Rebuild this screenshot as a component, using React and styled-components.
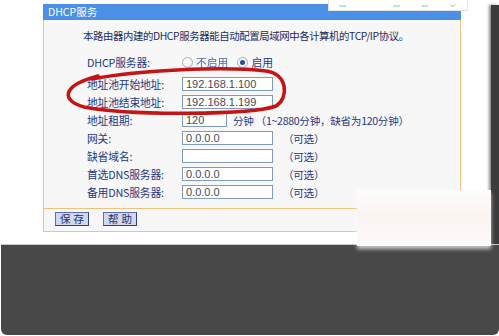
import React from "react";
import styled, { createGlobalStyle } from "styled-components";

const GlobalStyle = createGlobalStyle`
  html, body { margin: 0; padding: 0; background: #ffffff; }
  #root { width: 499px; height: 336px; }
`;

const CN = `"Noto Sans CJK SC", "DejaVu Sans", sans-serif`;

const Page = styled.div`
  position: relative;
  width: 499px;
  height: 336px;
  overflow: hidden;
  background: #ffffff;
  display: flex;
  flex-direction: column;
  font-family: ${CN};
`;

const TopArea = styled.div`
  height: 244px;
  display: flex;
  align-items: flex-start;
`;

const Panel = styled.section`
  margin-left: 43px;
  margin-top: 4px;
  width: 418px;
  display: flex;
  flex-direction: column;
`;

const Header = styled.div`
  height: 16px;
  background: #4b8fe6;
  color: #ffffff;
  font-size: 10.5px;
  line-height: 16px;
  padding-left: 5px;
`;

const Body = styled.div`
  height: 212px;
  box-sizing: border-box;
  background: #f7f7f8;
  border: 1px solid #f2c27d;
  border-top: none;
  display: flex;
  flex-direction: column;
`;

const Intro = styled.p`
  margin: 9px 0 0 39px;
  height: 14px;
  line-height: 14px;
  font-size: 10.4px;
  color: #1a2a64;
  white-space: nowrap;
  letter-spacing: -0.4px;
`;

const Form = styled.div`
  margin-top: 10px;
  padding-left: 43px;
  display: flex;
  flex-direction: column;
`;

const Row = styled.div`
  height: 18px;
  display: flex;
  align-items: center;
  margin-bottom: ${(p) => (p.$spaced ? "4px" : "0")};
`;

const Label = styled.span`
  width: 95px;
  flex: none;
  font-size: 10.8px;
  color: #1d3784;
  white-space: nowrap;
  letter-spacing: -0.2px;
`;

const Input = styled.div`
  width: ${(p) => p.$w || 91}px;
  height: 14px;
  box-sizing: border-box;
  border: 1px solid #7f9bc0;
  background: #ffffff;
  font-family: "Liberation Sans", Arial, sans-serif;
  font-size: 11px;
  line-height: 12px;
  color: #444a55;
  padding-left: 3px;
  flex: none;
`;

const Note = styled.span`
  margin-left: ${(p) => p.$ml || 10}px;
  font-size: 10.6px;
  color: #1d3784;
  white-space: nowrap;
  letter-spacing: -0.3px;
`;

const Radio = styled.span`
  width: 9px;
  height: 9px;
  border-radius: 50%;
  border: 1px solid #a8b0bc;
  background: radial-gradient(circle at 40% 40%, #ffffff 0, #e6e9ee 100%);
  margin: 0 3px 0 ${(p) => p.$ml || 0}px;
  position: relative;
  flex: none;
  &::after {
    content: "";
    display: ${(p) => (p.$on ? "block" : "none")};
    position: absolute;
    left: 2px;
    top: 2px;
    width: 5px;
    height: 5px;
    border-radius: 50%;
    background: #2a4b8e;
  }
`;

const RadioText = styled.span`
  font-size: 10.8px;
  color: #1d3784;
  opacity: ${(p) => (p.$dim ? 0.75 : 1)};
`;

const Footer = styled.div`
  margin-top: 7px;
  border-top: 1px solid #f2c27d;
  padding: 3px 0 0 11px;
  display: flex;
  gap: 14px;
`;

const Button = styled.div`
  width: 34px;
  height: 14px;
  box-sizing: border-box;
  border: 1px solid #5a6fae;
  border-right-color: #2f3f77;
  border-bottom-color: #2f3f77;
  background: #cfd8ee;
  color: #1d2f6e;
  font-size: 10.5px;
  line-height: 12px;
  text-align: center;
  letter-spacing: 3px;
  padding-left: 3px;
`;

const RightShade = styled.div`
  margin-left: auto;
  margin-top: 5px;
  width: 8px;
  align-self: stretch;
  background: #3b3b3b;
  box-shadow: -2px 0 3px rgba(40, 40, 40, 0.55);
`;

const BottomArea = styled.div`
  flex: 1;
  background: #484848;
  border-top: 1px solid #c9c9c9;
  border-radius: 0 0 6px 6px;
  margin: 0 0 1px 1px;
`;

const Tabs = styled.div`
  position: absolute;
  left: 328px;
  top: 0;
  width: 138px;
  height: 10px;
  background: #ffffff;
  border: 1px solid #e4e4e4;
  border-top: none;
  display: flex;
  align-items: center;
  justify-content: space-around;
`;

const TabItem = styled.span`
  font-family: "Liberation Sans", sans-serif;
  font-size: 4px;
  color: #4bb3a4;
  letter-spacing: 0.5px;
`;

const Glare = styled.div`
  position: absolute;
  left: 357px;
  top: 190px;
  width: 134px;
  height: 56px;
  background: linear-gradient(180deg, #fcfcfc 0%, #fbf4f1 45%, #fdfafa 100%);
  box-shadow: 0 3px 4px rgba(255, 255, 255, 0.7);
  filter: blur(0.6px);
`;

const Loop = styled.svg`
  position: absolute;
  left: 0;
  top: 0;
  pointer-events: none;
`;

const rows = [
  { label: "地址池开始地址:", value: "192.168.1.100" },
  { label: "地址池结束地址:", value: "192.168.1.199" },
  { label: "地址租期:", value: "120", lease: true },
  { label: "网关:", value: "0.0.0.0", optional: true },
  { label: "缺省域名:", value: "", optional: true },
  { label: "首选DNS服务器:", value: "0.0.0.0", optional: true },
  { label: "备用DNS服务器:", value: "0.0.0.0", optional: true },
];

export default function App() {
  return (
    <>
      <GlobalStyle />
      <Page>
        <TopArea>
          <Panel>
            <Header>DHCP服务</Header>
            <Body>
              <Intro>本路由器内建的DHCP服务器能自动配置局域网中各计算机的TCP/IP协议。</Intro>
              <Form>
                <Row $spaced>
                  <Label>DHCP服务器:</Label>
                  <Radio />
                  <RadioText $dim>不启用</RadioText>
                  <Radio $on $ml={9} />
                  <RadioText>启用</RadioText>
                </Row>
                {rows.map((r) => (
                  <Row key={r.label}>
                    <Label>{r.label}</Label>
                    <Input $w={r.lease ? 45 : 91}>{r.value}</Input>
                    {r.lease && (
                      <>
                        <Note $ml={6}>分钟</Note>
                        <Note $ml={2}>（1~2880分钟，缺省为120分钟）</Note>
                      </>
                    )}
                    {r.optional && <Note>（可选）</Note>}
                  </Row>
                ))}
              </Form>
              <Footer>
                <Button>保存</Button>
                <Button>帮助</Button>
              </Footer>
            </Body>
          </Panel>
          <RightShade />
        </TopArea>
        <BottomArea />
        <Tabs>
          <TabItem>ww</TabItem>
          <TabItem>· ·</TabItem>
          <TabItem>ww</TabItem>
          <TabItem>ww</TabItem>
          <TabItem>"w"</TabItem>
        </Tabs>
        <Glare />
        <Loop width="499" height="336" viewBox="0 0 499 336">
          <path
            d="M92 79 C 140 70, 225 66, 266 71 C 288 74, 289 98, 276 106 C 252 115, 130 116, 84 107 C 62 101, 60 86, 98 76"
            fill="none"
            stroke="#c61414"
            strokeWidth="3.6"
            strokeLinecap="round"
          />
        </Loop>
      </Page>
    </>
  );
}
